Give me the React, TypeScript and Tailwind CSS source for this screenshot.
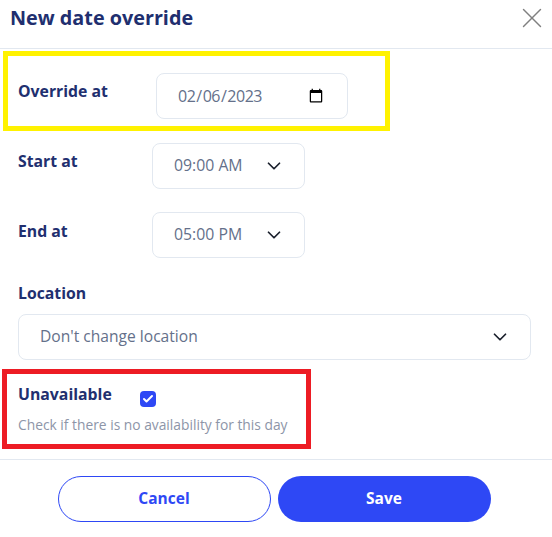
import { Check, ChevronDown, X } from "lucide-react";

const font = { fontFamily: '"Open Sans", "Noto Sans", sans-serif' };

function TimeSelect({ value }: { value: string }) {
  return (
    <button className="flex h-[46px] w-[153px] items-center justify-between rounded-lg border border-[#e2e8f0] bg-white pl-[21px] pr-[19px] text-[15.8px] text-[#64708a]">
      <span className="pb-[1px]">{value}</span>
      <ChevronDown className="h-[22px] w-[22px] text-[#1a202c]" strokeWidth={1.9} />
    </button>
  );
}

export default function App() {
  return (
    <div className="h-[537px] w-[552px] overflow-hidden bg-white" style={font}>
      <div className="flex h-[49px] items-center justify-between border-b border-[#e2e8f0] pb-[12px] pl-[10px] pr-[3px]">
        <h1 className="text-[19.8px] font-bold text-[#212f6f]">New date override</h1>
        <X className="h-[34px] w-[34px] text-[#808080]" strokeWidth={1} />
      </div>

      <div className="ml-[3px] mt-[2px] flex h-[80px] w-[387px] items-start border-[5px] border-[#fff200]">
        <label className="ml-[10px] mt-[23px] w-[138px] text-[15.8px] font-bold leading-[24px] text-[#212f6f]">Override at</label>
        <input
          type="date"
          defaultValue="2023-02-06"
          className="mt-[17px] h-[46px] w-[192px] rounded-lg border border-[#e2e8f0] bg-white pb-[1px] pl-[20px] pr-[21px] text-base tracking-[-0.5px] text-[#64708a]"
        />
      </div>

      <div className="ml-[18px] mt-[12px] flex h-[46px] items-start">
        <label className="w-[134px] pt-[7px] text-[15.8px] font-bold text-[#212f6f]">Start at</label>
        <TimeSelect value="09:00 AM" />
      </div>
      <div className="ml-[18px] mt-[23px] flex h-[46px] items-start">
        <label className="w-[134px] pt-[8px] text-[15.8px] font-bold text-[#212f6f]">End at</label>
        <TimeSelect value="05:00 PM" />
      </div>

      <div className="ml-[18px] mt-[23px]">
        <label className="block h-[33px] text-[15.8px] font-bold leading-[24px] text-[#212f6f]">Location</label>
        <button className="flex h-[46px] w-[513px] items-center justify-between rounded-lg border border-[#e2e8f0] bg-white pl-[21px] pr-[19px] text-[15.6px] text-[#64708a]">
          <span className="pb-[1px]">Don't change location</span>
          <ChevronDown className="h-[22px] w-[22px] text-[#1a202c]" strokeWidth={1.9} />
        </button>
      </div>

      <div className="ml-[2px] mt-[9px] h-[80px] w-[309px] border-[5px] border-[#ed1c24] pl-[11px] pt-[8px]">
        <div className="flex items-start">
          <label className="w-[122px] text-[15.8px] font-bold leading-[24px] text-[#212f6f]">Unavailable</label>
          <span className="mt-[9px] flex h-4 w-4 items-center justify-center rounded-[4px] bg-[#2e48f5]">
            <Check className="h-3 w-3 text-white" strokeWidth={4} />
          </span>
        </div>
        <p className="mt-[8px] text-[13.8px] leading-[20px] text-[#8d95a8]">Check if there is no availability for this day</p>
      </div>

      <div className="mt-[10px] flex justify-center gap-[7px] border-t border-[#e2e8f0] pr-[4px] pt-[16px]">
        <button className="h-[46px] w-[213px] rounded-full border border-[#2e48f5] bg-white pb-[1px] text-[15.5px] font-bold text-[#2e48f5]">Cancel</button>
        <button className="h-[46px] w-[213px] rounded-full bg-[#2e48f5] pb-[1px] text-[15.5px] font-bold text-white">Save</button>
      </div>
    </div>
  );
}
